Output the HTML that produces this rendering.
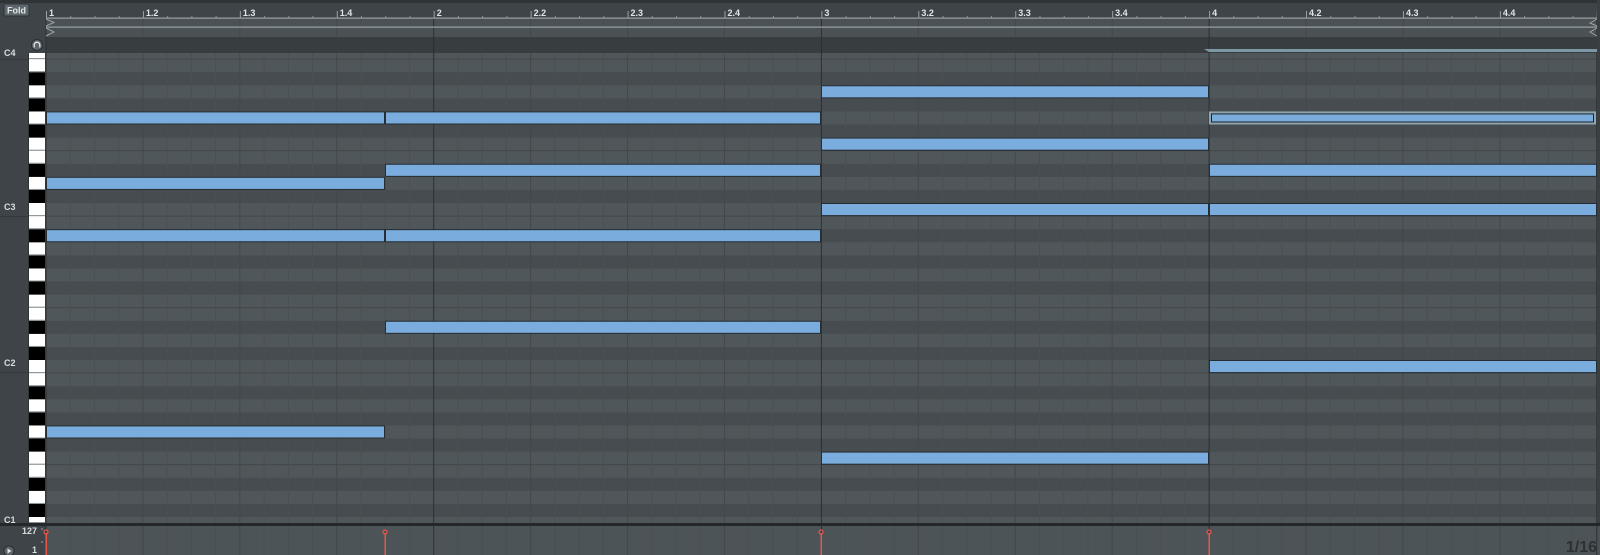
<!DOCTYPE html>
<html><head><meta charset="utf-8"><style>
html,body{margin:0;padding:0;background:#3f4448;width:1600px;height:555px;overflow:hidden}
svg{display:block}
text{font-family:"Liberation Sans",sans-serif;font-weight:bold}
</style></head><body>
<svg id="s" width="1600" height="555" xmlns="http://www.w3.org/2000/svg">
<rect x="0" y="0" width="1600" height="555" fill="#3f4448"/>
<rect x="0" y="0" width="1600" height="3" fill="#2e3336"/>
<g id="grid"></g>
<g id="keys"></g>
<g id="ruler"></g>
<g id="notes"></g>
<rect x="4" y="4" width="25" height="12" rx="1" fill="#5d666b" stroke="#2f3437"/>
<text x="16.5" y="13.5" font-size="9" fill="#dfe6ea" text-anchor="middle">Fold</text>
<circle cx="37" cy="45" r="5.5" fill="#5d666b" stroke="#2a2e31"/>
<path d="M34.2 47.5 v-2.5 a2.8 2.8 0 0 1 5.6 0 v2.5" stroke="#e0e6ea" stroke-width="1.3" fill="none"/>
<text x="4" y="56" font-size="9" fill="#d8dde0">C4</text>
<text x="4" y="210" font-size="9" fill="#d8dde0">C3</text>
<text x="4" y="366" font-size="9" fill="#d8dde0">C2</text>
<text x="4" y="523" font-size="9" fill="#d8dde0">C1</text>
<rect x="0" y="59" width="29" height="1" fill="#33383b"/>
<rect x="0" y="216" width="29" height="1" fill="#33383b"/>
<rect x="0" y="372" width="29" height="1" fill="#33383b"/>
<rect x="0" y="523" width="1600" height="3" fill="#24282a"/>
<rect x="46" y="526" width="1554" height="29" fill="#4d5457"/>
<rect x="0" y="526" width="46" height="29" fill="#3f4448"/>
<g id="vel"></g>
<text x="37" y="534" font-size="9" fill="#d8dde0" text-anchor="end">127</text>
<text x="37" y="553" font-size="9" fill="#d8dde0" text-anchor="end">1</text>
<path d="M41 529 h2 M41 542 h2" stroke="#9aa1a5"/>
<circle cx="9" cy="551" r="5" fill="#5d666b" stroke="#2a2e31"/>
<path d="M7.5 548.5 L11.5 551 L7.5 553.5Z" fill="#e0e6ea"/>
<text x="1597" y="552" font-size="16" fill="#2c3134" text-anchor="end">1/16</text>
</svg>
<script>
(function(){
var NS="http://www.w3.org/2000/svg";
function el(p,t,a){var e=document.createElementNS(NS,t);for(var k in a)e.setAttribute(k,a[k]);p.appendChild(e);return e;}
var G=document.getElementById('grid'),K=document.getElementById('keys'),R=document.getElementById('ruler'),N=document.getElementById('notes'),V=document.getElementById('vel');
var RH=13.083, X0=46, BAR=387.7, X1=1597;
function rowTop(k){return 360-RH*k;}
var black=[1,3,6,8,10];
el(G,'rect',{x:X0,y:53,width:X1-X0,height:470,fill:'#4e5558'});
for(var k=-13;k<=25;k++){
  var y=rowTop(k), n=((k%12)+12)%12;
  var isB=black.indexOf(n)>=0;
  var y0=Math.max(53,y), y1=Math.min(523,y+RH);
  if(y1<=y0) continue;
  el(G,'rect',{x:X0,y:y0,width:X1-X0,height:y1-y0,fill:isB?'#464c4f':'#50575a'});
  if(n==0||n==5){ if(y+RH<=523&&y+RH>=53) el(G,'rect',{x:X0,y:y+RH-0.5,width:X1-X0,height:1,fill:'#42474a'}); }
  el(K,'rect',{x:29,y:y0,width:16,height:y1-y0,fill:isB?'#000':'#fff'});
  if(!isB) el(K,'rect',{x:29,y:Math.min(y+RH,523)-1,width:16,height:1,fill:'#8a8f92'});
}
el(K,'rect',{x:28,y:53,width:1,height:470,fill:'#2f3437'});
el(G,'rect',{x:X0,y:18,width:X1-X0,height:20,fill:'#4b5255'});
var S=BAR/16;
for(var i=0;i<=64;i++){
  var x=X0+i*S; if(x>X1)break;
  var c='#495053';
  if(i%16==0){c='#2c3033';}else if(i%4==0){c='#42484b';}
  el(G,'rect',{x:x-0.5,y:18,width:1,height:505,fill:c});
  el(V,'rect',{x:x-0.5,y:526,width:1,height:29,fill:c});
  if(i%4==0){
    el(R,'rect',{x:x,y:11,width:1,height:7,fill:'#9aa1a5'});
    var b=Math.floor(i/16)+1, sub=(i%16)/4+1;
    var t=el(R,'text',{x:x+3,y:16,'font-size':9,fill:'#dfe5e8'}); t.textContent=sub==1?(''+b):(b+'.'+sub);
  } else el(R,'rect',{x:x,y:16,width:1,height:2,fill:'#8a9195'});
}
el(G,'rect',{x:X0,y:37,width:X1-X0,height:16,fill:'#383d40'});
for(var bi=0;bi<4;bi++){el(G,'rect',{x:X0+bi*BAR-0.5,y:37,width:1,height:16,fill:'#2a2e31'});}
el(G,'rect',{x:1209,y:49,width:X1-1209,height:3,fill:'#7d98a5'});
el(G,'path',{d:'M1204 49 L1209 49 L1209 52Z',fill:'#7d98a5'});
el(R,'rect',{x:X0,y:17.5,width:X1-X0,height:1.2,fill:'#9ba2a6'});
el(R,'rect',{x:X0,y:26.5,width:X1-X0,height:1.2,fill:'#9ba2a6'});
el(R,'path',{d:'M46 19 L54 22.5 L46 26 M46 28 L54 32 L46 36',stroke:'#9ba2a6',fill:'none','stroke-width':1});
el(R,'path',{d:'M1597 19 L1590 23 L1597 26 M1597 28 L1590 32 L1597 36',stroke:'#9ba2a6',fill:'none','stroke-width':1});
el(R,'rect',{x:1597,y:0,width:3,height:555,fill:'#3a3f42'});
var segs=[[46,385],[385,821],[821,1209],[1209,1597]];
var notes=[[0,[19,14,10,-5]],[1,[19,15,10,3]],[2,[21,17,12,-7]],[3,[19,15,12,0]]];
for(var q=0;q<notes.length;q++){
  var s=notes[q][0], ks=notes[q][1];
  var a=segs[s][0], bb=segs[s][1];
  for(var j=0;j<ks.length;j++){
    var kk=ks[j], yy=rowTop(kk);
    if(s==3&&kk==19){
      el(N,'rect',{x:a,y:yy,width:bb-a-1,height:RH,fill:'#8fa6b0'});
      el(N,'rect',{x:a+2.5,y:yy+2.5,width:bb-a-6,height:RH-5,fill:'#7aaddd',stroke:'#1b2228','stroke-width':1});
    } else {
      el(N,'rect',{x:a+0.5,y:yy+0.5,width:bb-a-1,height:RH-1,fill:'#7aaddd',stroke:'#262d33','stroke-width':1});
    }
  }
}
for(var m=0;m<segs.length;m++){
  var ax=segs[m][0];
  el(V,'rect',{x:ax-0.5,y:533,width:1.5,height:22,fill:'#e8564a'});
  el(V,'circle',{cx:ax,cy:532,r:2,fill:'none',stroke:'#e8564a','stroke-width':1.2});
}
})();
</script>
</body></html>
